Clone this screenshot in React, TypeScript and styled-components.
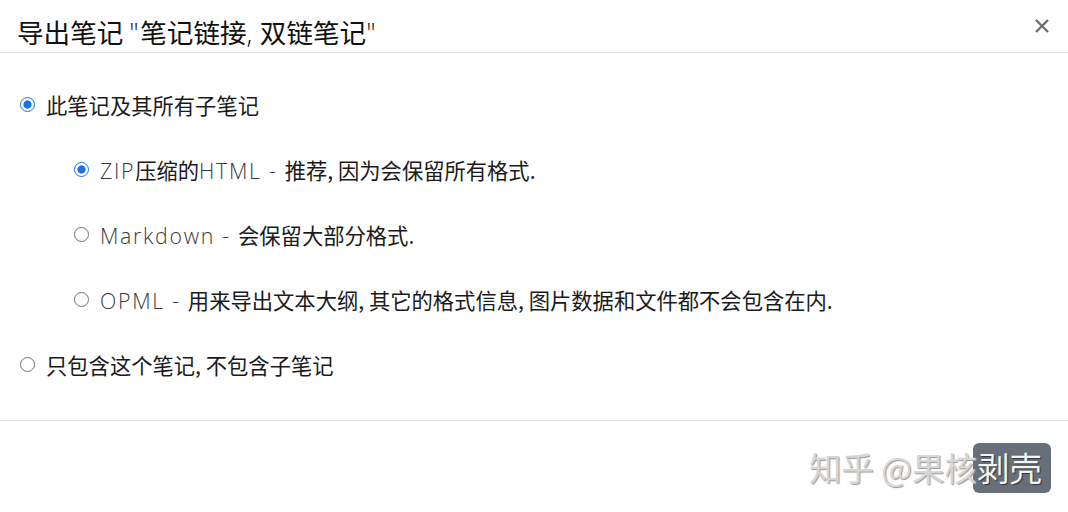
import React from "react";
import styled, { createGlobalStyle } from "styled-components";

const Global = createGlobalStyle`
  html, body { margin: 0; padding: 0; background: #fff; }
  body { font-family: "Open Sans", "Noto Sans CJK SC", sans-serif; color: #212529; }
`;

const Modal = styled.div`
  position: relative;
  width: 1068px;
  height: 512px;
  background: #fff;
  display: flex;
  flex-direction: column;
`;

const Header = styled.div`
  display: flex;
  align-items: flex-start;
  justify-content: space-between;
  height: 53px;
  padding: 12px 18px 0 17px;
  box-sizing: border-box;
  border-bottom: 1px solid #dee2e6;
`;

const Title = styled.h5`
  margin: 0;
  font-family: "Noto Sans CJK SC", sans-serif;
  font-weight: 400;
  font-size: 26.6px;
  line-height: 40px;
  color: #111;
`;

const Q = styled.span`
  font-family: "Open Sans", sans-serif;
  font-weight: 300;
  letter-spacing: 1.5px;
`;

const Close = styled.button`
  border: 0;
  background: none;
  padding: 0;
  margin-top: 6px;
  width: 16px;
  height: 16px;
  display: flex;
`;

const Body = styled.div`
  display: flex;
  flex-direction: column;
  gap: 33px;
  padding: 35px 17px 40px 20px;
  border-bottom: 1px solid #dee2e6;
`;

const Row = styled.label<{ $indent?: boolean }>`
  display: flex;
  align-items: center;
  gap: 11px;
  height: 32px;
  padding-left: ${(p) => (p.$indent ? "54px" : "0")};
  font-family: "Noto Sans CJK SC", sans-serif;
  font-size: 21.3px;
  color: #1a1a1a;
`;

const Radio = styled.span<{ $checked?: boolean }>`
  width: 15px;
  height: 15px;
  box-sizing: border-box;
  border-radius: 50%;
  flex: none;
  margin-top: 1px;
  border: ${(p) => (p.$checked ? "1.6px solid #1a73e8" : "1.3px solid #6f6f6f")};
  background: ${(p) => (p.$checked ? "radial-gradient(circle, #1a73e8 0 3.8px, #fff 4.4px)" : "#fff")};
`;

const Latin = styled.span`
  font-family: "Open Sans", sans-serif;
  font-weight: 300;
  letter-spacing: 1.7px;
  color: #3a3a3a;
`;

const Footer = styled.div`
  display: flex;
  justify-content: flex-end;
  padding: 22px 17px 0 17px;
`;

const Button = styled.button`
  width: 78px;
  height: 50px;
  border: 0;
  border-radius: 6px;
  background: #676f78;
  color: #fff;
`;

const Watermark = styled.div`
  position: absolute;
  right: 26px;
  top: 446px;
  font-family: "Noto Sans CJK SC", sans-serif;
  font-size: 32.5px;
  line-height: 42px;
  color: #d6d6d6;
  text-shadow: 1px 1px 1px #9a9a9a;
  pointer-events: none;
  white-space: pre;
`;

const Light = styled.span`
  color: #f4f4f4;
  text-shadow: 1px 1px 1px #333;
`;

export default function App() {
  return (
    <>
      <Global />
      <Modal>
        <Header>
          <Title>
            导出笔记 <Q>"</Q>笔记链接<Q>,</Q> 双链笔记<Q>"</Q>
          </Title>
          <Close aria-label="close">
            <svg width="16" height="16" viewBox="0 0 16 16">
              <path d="M2 2 L14 14 M14 2 L2 14" stroke="#6e6e6e" strokeWidth="2.4" />
            </svg>
          </Close>
        </Header>
        <Body>
          <Row>
            <Radio $checked />
            此笔记及其所有子笔记
          </Row>
          <Row $indent>
            <Radio $checked />
            <span>
              <Latin>ZIP</Latin>压缩的<Latin>HTML - </Latin>推荐, 因为会保留所有格式.
            </span>
          </Row>
          <Row $indent>
            <Radio />
            <span>
              <Latin>Markdown - </Latin>会保留大部分格式.
            </span>
          </Row>
          <Row $indent>
            <Radio />
            <span>
              <Latin>OPML - </Latin>用来导出文本大纲, 其它的格式信息, 图片数据和文件都不会包含在内.
            </span>
          </Row>
          <Row>
            <Radio />
            只包含这个笔记, 不包含子笔记
          </Row>
        </Body>
        <Footer>
          <Button aria-label="导出" />
        </Footer>
        <Watermark>
          知乎 @果核<Light>剥壳</Light>
        </Watermark>
      </Modal>
    </>
  );
}
